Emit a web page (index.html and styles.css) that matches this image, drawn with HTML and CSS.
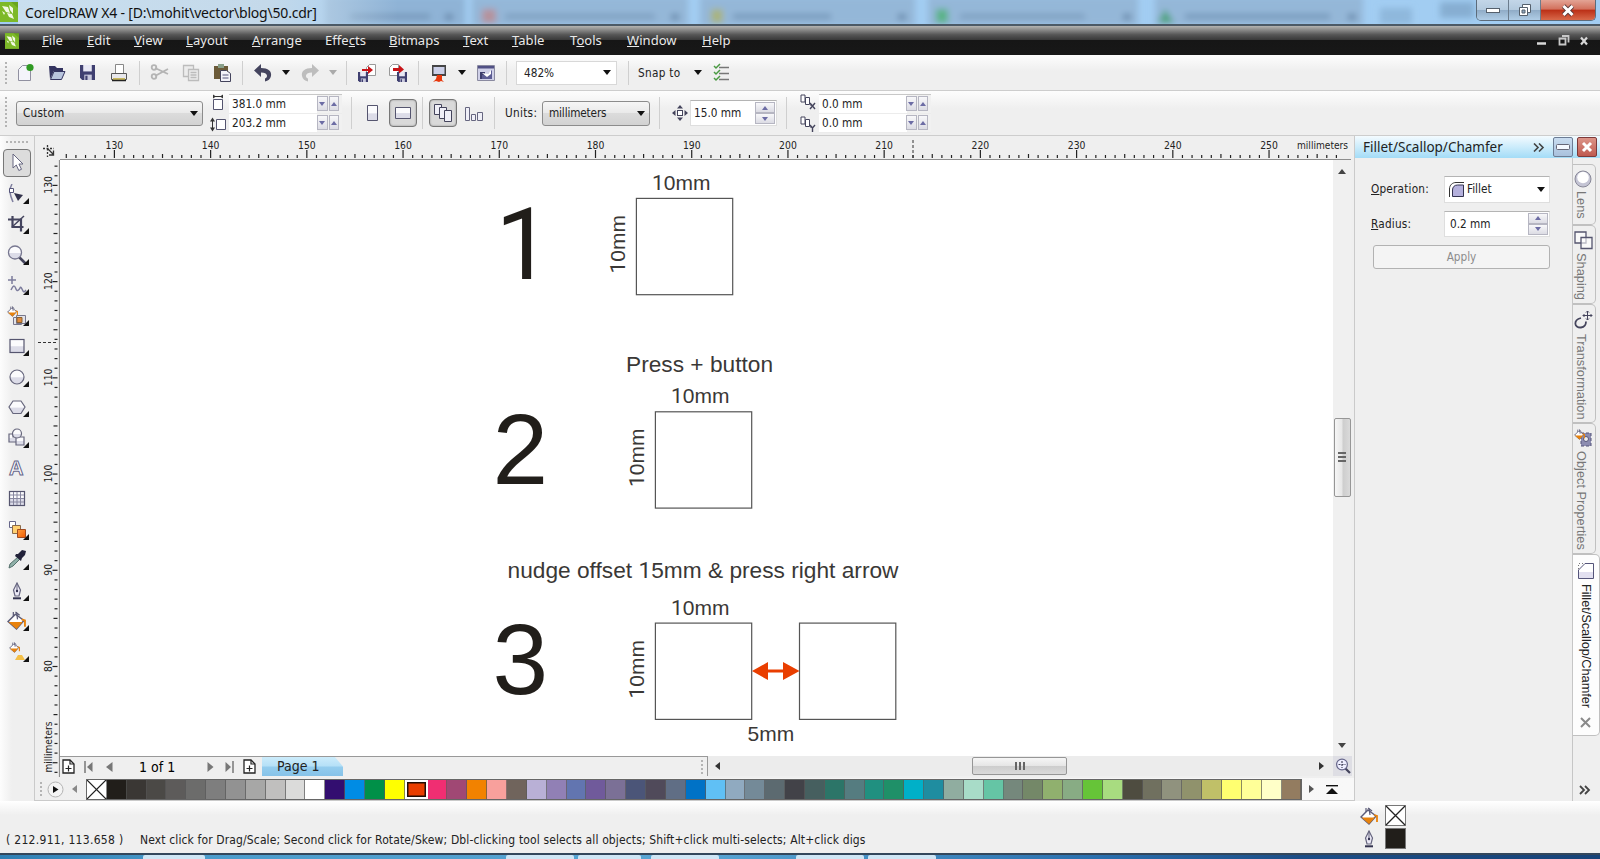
FILE: index.html
```html
<!DOCTYPE html>
<html lang="en">
<head>
    <meta charset="UTF-8">
    <meta name="viewport" content="width=device-width, initial-scale=1.0">
    <title>CorelDRAW X4 - [D:\mohit\vector\blog\50.cdr]</title>
    <link rel="stylesheet" href="styles.css">
</head>
<body>
    <!-- shared icons -->
    <svg class="defs" width="0" height="0">
        <defs>
            <linearGradient id="gShape" x1="0" y1="0" x2="0" y2="1">
                <stop offset="0.5" stop-color="#fbfbfd"/><stop offset="0.55" stop-color="#dcdce8"/>
            </linearGradient>
            <linearGradient id="gOrange" x1="0" y1="0" x2="1" y2="1">
                <stop offset="0" stop-color="#ffa040"/><stop offset="1" stop-color="#f05a00"/>
            </linearGradient>
            <symbol id="corel" viewBox="0 0 18 20">
                <rect width="18" height="20" fill="#6aa51e"/>
                <path d="M0 0h11l7 6v14h-18z" fill="#7db928"/>
                <path d="M2 4l6 1 2 6-4-1z M9 3l4 3 0 6-3-4z M7 11l5 1 2 5-5-2z M2 9l3 2-1 2z" fill="#f4fae6"/>
            </symbol>
            <symbol id="bucket" viewBox="0 0 18 18">
                <path d="M1 10L8 3l8 6-7 8z" fill="#fff" stroke="#5c5c78" stroke-width="1.4"/>
                <path d="M1.5 10.5h13.500l-6 6.500z" fill="#e8820c"/>
                <path d="M6 1v4M9 1l1 7M8 1l4 3" stroke="#5c5c78" stroke-width="1.200" fill="none"/>
                <path d="M14 8l3 1v6" stroke="#e8820c" stroke-width="1.800" fill="none"/>
            </symbol>
            <symbol id="pen" viewBox="0 0 18 18">
                <path d="M9 1l3.500 7-1.500 6h-4l-1.500-6z" fill="#eceaf6" stroke="#66667f" stroke-width="1.200"/>
                <path d="M9 1v8" stroke="#66667f"/>
                <circle cx="9" cy="9" r="1.200" fill="#333350"/>
                <path d="M5 16.300h8" stroke="#333350" stroke-width="2"/>
            </symbol>
            <symbol id="pageplus" viewBox="0 0 13 15">
                <path d="M1 1h7l4 4v9H1z" fill="#fff" stroke="#222" stroke-width="1.300"/>
                <path d="M8 1v4h4M3.500 9.500h6M6.500 6.500v6" stroke="#222" stroke-width="1.200" fill="none"/>
            </symbol>
            <symbol id="floppy" viewBox="0 0 14 14">
                <path d="M0 0h14v14H2L0 12z" fill="#3f3f70"/>
                <path d="M3 0h8v6H3z" fill="#e8e8f4"/><path d="M4 9h7v5H4z" fill="#c8c8dc"/><path d="M5 10h2v4H5z" fill="#3f3f70"/>
            </symbol>
            <symbol id="dup" viewBox="0 0 12 12">
                <path d="M1 1h4v7H1z" fill="#fff" stroke="#44445c"/><path d="M5.500 3.500h4v7h-4z" fill="#fff" stroke="#44445c"/><path d="M10 11h2" stroke="#44445c"/>
            </symbol>
        </defs>
    </svg>

    <header class="titlebar">
        <svg class="glass" width="1600" height="26">
            <defs><filter id="soft"><feGaussianBlur stdDeviation="3"/></filter></defs>
            <g filter="url(#soft)">
                <rect x="325" y="-4" width="140" height="30" fill="#8fb3d6"/>
                <rect x="472" y="-4" width="216" height="30" fill="#94b7d8"/>
                <rect x="700" y="-4" width="215" height="30" fill="#94b7d8"/>
                <rect x="928" y="-4" width="210" height="30" fill="#94b7d8"/>
                <rect x="1155" y="-4" width="208" height="30" fill="#94b7d8"/>
                <rect x="350" y="14" width="80" height="5" fill="#7596b8"/>
                <rect x="505" y="14" width="150" height="5" fill="#7d9dbe"/>
                <rect x="733" y="14" width="98" height="5" fill="#7596b8"/>
                <rect x="960" y="14" width="125" height="5" fill="#7d9dbe"/>
                <rect x="1185" y="14" width="145" height="5" fill="#7596b8"/>
                <rect x="482" y="9" width="14" height="14" fill="#b5929c"/>
                <rect x="711" y="9" width="12" height="14" fill="#a8b47e"/>
                <rect x="936" y="9" width="12" height="14" fill="#59b386"/>
                <path d="M1158 23l7-14 9 14z" fill="#4ba37c"/>
                <rect x="445" y="14" width="8" height="6" fill="#6888aa"/>
                <rect x="671" y="14" width="8" height="6" fill="#6888aa"/>
                <rect x="898" y="14" width="8" height="6" fill="#6888aa"/>
                <rect x="1123" y="14" width="8" height="6" fill="#6888aa"/>
                <rect x="1348" y="14" width="8" height="6" fill="#6888aa"/>
                <rect x="1380" y="8" width="32" height="16" fill="#8fb8dc"/>
                <rect x="1440" y="2" width="34" height="16" fill="#86aed2"/>
            </g>
        </svg>
        <svg class="app-icon" width="18" height="20"><use href="#corel"/></svg>
        <span class="title">CorelDRAW X4 - [D:\mohit\vector\blog\50.cdr]</span>
        <div class="win-buttons">
            <span class="wb"><svg width="16" height="8"><rect x="1.500" y="2.500" width="13" height="4" fill="#fff" stroke="#55606c"/></svg></span>
            <span class="wb"><svg width="16" height="14"><path d="M5.500 1.500h8v8h-8z" fill="#fff" stroke="#55606c"/><path d="M2.500 4.500h8v8h-8z" fill="#fff" stroke="#55606c"/><path d="M5 7h3v3H5z" fill="#8fa8c0" stroke="#55606c"/></svg></span>
            <span class="wb close"><svg width="14" height="13"><path d="M2.500 2l9 9M11.500 2l-9 9" stroke="#5a3a3a" stroke-width="4.600"/><path d="M2.500 2l9 9M11.500 2l-9 9" stroke="#fff" stroke-width="3"/></svg></span>
        </div>
    </header>

    <nav class="menubar">
        <svg class="doc-icon" width="14" height="18"><use href="#corel" width="14" height="18"/></svg>
        <div class="menus">
            <span><u>F</u>ile</span><span><u>E</u>dit</span><span><u>V</u>iew</span><span><u>L</u>ayout</span><span><u>A</u>rrange</span><span>Effe<u>c</u>ts</span><span><u>B</u>itmaps</span><span><u>T</u>ext</span><span><u>T</u>able</span><span>T<u>o</u>ols</span><span><u>W</u>indow</span><span><u>H</u>elp</span>
        </div>
        <svg class="mdi" width="56" height="14"><path d="M2 9.500h9" stroke="#d8d8d8" stroke-width="2.500"/><path d="M24.500 4.500h6v6h-6z M27 2h6.500v6.500" fill="none" stroke="#c8c8c8" stroke-width="1.800"/><path d="M46 3.500l6 7M52 3.500l-6 7" stroke="#d8d8d8" stroke-width="2.200"/></svg>
    </nav>

    <div class="toolbar">
        <i class="grip"></i>
        <span class="tb"><svg width="20" height="20"><path d="M2.500 17.500v-11l4-4h8v15z" fill="#f4f4fa" stroke="#9090a0"/><circle cx="14" cy="4.500" r="3.600" fill="#2f9a22"/></svg></span>
        <span class="tb"><svg width="20" height="20"><path d="M2 3h6l2 2h6v3H7L3 16z" fill="#343460"/><path d="M7 8.500h11l-3.500 8H3.500z" fill="#b8c4dc" stroke="#343460"/></svg></span>
        <span class="tb"><svg width="15" height="15"><use href="#floppy"/></svg></span>
        <span class="tb"><svg width="20" height="20"><path d="M6.500 1.500h8v9h-8z" fill="#fff" stroke="#888"/><path d="M2.500 10.500h15v6h-15z" fill="#e8e8ec" stroke="#555"/><path d="M4 15h12v2H4z" fill="#c8b860"/><path d="M3 17.500h14" stroke="#222" stroke-width="1.500"/></svg></span>
        <i class="sep"></i>
        <span class="tb"><svg width="20" height="20" fill="none" stroke="#b4b4b4" stroke-width="1.800"><path d="M5 5l13 6M5 13l13-7"/><circle cx="4" cy="4.500" r="2.300"/><circle cx="4" cy="13.500" r="2.300"/></svg></span>
        <span class="tb"><svg width="20" height="20" fill="#ececec" stroke="#bcbcbc" stroke-width="1.300"><path d="M2.500 2.500h10v11h-10z"/><path d="M7.500 6.500h10v11h-10z"/><path d="M9.500 9.500h6M9.500 12h6M9.500 14.500h6"/></svg></span>
        <span class="tb"><svg width="20" height="20"><path d="M2 3h14v13H2z" fill="#6b5a38"/><path d="M6 1h6v4H6z" fill="#8aa08a"/><path d="M8.500 7.500h6l4 3v8h-10z" fill="#f2f2fa" stroke="#44445c"/><path d="M10.500 12h6M10.500 15h6" stroke="#55557a"/></svg></span>
        <i class="sep"></i>
        <span class="tb"><svg width="20" height="20"><path d="M1 7.500L8 1v4c7 0 11 3 10 8-.5 3-3 5-6 5.500v-3c3-1 3.500-6-4-6v4.500z" fill="#44445e"/></svg></span>
        <span class="caret-slot"><i class="caret"></i></span>
        <span class="tb"><svg width="20" height="20"><path d="M19 7.500L12 1v4C5 5 1 8 2 13c.5 3 3 5 6 5.500v-3c-3-1-3.500-6 4-6v4.500z" fill="#bdbdbd"/></svg></span>
        <span class="caret-slot"><i class="caret off"></i></span>
        <i class="sep"></i>
        <span class="tb"><svg width="20" height="20"><path d="M9.500 12.500v-8l3-3h6v11z" fill="#fff" stroke="#999"/><use href="#floppy" x="1" y="9" width="10" height="10"/><path d="M5 6h6V3l5 4-5 4V8H5z" fill="#c81418"/></svg></span>
        <span class="tb"><svg width="20" height="20"><path d="M1.500 12.500v-8l3-3h6v11z" fill="#fff" stroke="#999"/><use href="#floppy" x="9" y="9" width="10" height="10"/><path d="M5 5h6V2l5 4.500-5 4V8H5z" fill="#c81418"/></svg></span>
        <i class="sep"></i>
        <span class="tb"><svg width="18" height="20"><path d="M2 2h14v11H2z" fill="#444"/><path d="M3.500 4h11v7h-11z" fill="#ccd0e8"/><path d="M7 12h5v5l2 2-3-1-2 1-3-1-3 1 3-3z" fill="#e8380c"/></svg></span>
        <span class="caret-slot"><i class="caret"></i></span>
        <span class="tb"><svg width="20" height="20"><path d="M1.500 2.500h17v15h-17z" fill="#cfd0e8" stroke="#8a8aa0"/><path d="M2 3h16v2.500H2z" fill="#505084"/><path d="M4 9h5v7H4z" fill="#3c3c6c"/><path d="M6 12l6-1 4-4v9H6z" fill="#5c5c94"/><path d="M6 10l6 1 3-4v4l-4 3z" fill="#fff"/></svg></span>
        <i class="sep"></i>
        <div class="zoom-level"><span>482%</span><i class="caret"></i></div>
        <i class="sep"></i>
        <span class="snap">Snap to</span>
        <i class="caret"></i>
        <svg class="options" width="17" height="19" fill="none"><path d="M6 4.500h10M6 10.500h10M6 16.500h10" stroke="#777" stroke-width="1.300"/><path d="M1 3l2 2 4-4M1 9l2 2 4-4M1 15l2 2 4-4" stroke="#4a9a42" stroke-width="1.500"/></svg>
    </div>

    <div class="propbar">
        <i class="grip"></i>
        <div class="select paper"><span>Custom</span><i class="caret"></i></div>
        <div class="pair-icons">
            <svg width="17" height="17"><path d="M4.500 5.500h9v10h-9z" fill="#fff" stroke="#55556f"/><path d="M4 2.500h10" stroke="#333"/><path d="M4 .500v4l3-2zM14 .500v4l-3-2z" fill="#333"/></svg>
            <svg width="17" height="15"><path d="M7.500 2.500h9v10h-9z" fill="#fff" stroke="#55556f"/><path d="M3.500 2v11" stroke="#333"/><path d="M1 4.500h5l-2.500-4zM1 10.500h5l-2.500 4z" fill="#333"/></svg>
        </div>
        <div class="pair size">
            <div><span>381.0 mm</span><b class="dn"></b><b class="up"></b></div>
            <div><span>203.2 mm</span><b class="dn"></b><b class="up"></b></div>
        </div>
        <i class="sep s1"></i>
        <span class="orient"><svg width="13" height="18"><path d="M1.500 1.500h10v15h-10z" fill="url(#gShape)" stroke="#55556f"/></svg></span>
        <span class="orient on"><svg width="18" height="14"><path d="M1.500 1.500h15v11h-15z" fill="url(#gShape)" stroke="#55556f"/></svg></span>
        <i class="sep s2"></i>
        <span class="orient on"><svg width="20" height="20" fill="#f0f0f8" stroke="#44445c"><path d="M1.500 1.500h7v10h-7z"/><path d="M6.500 4.500h7v11h-7z"/><path d="M11.500 7.500h7v11h-7z"/></svg></span>
        <span class="orient"><svg width="20" height="18" fill="#f0f0f8" stroke="#666680"><path d="M1.500 3.500h4v13h-4z"/><path d="M7.500 10.500h4v6h-4z"/><path d="M13.500 8.500h5v8h-5z"/></svg></span>
        <i class="sep s3"></i>
        <span class="units">Units:</span>
        <div class="select unit"><span>millimeters</span><i class="caret"></i></div>
        <i class="sep s4"></i>
        <svg class="nudge-icon" width="16" height="16"><path d="M8 0l3 3.500H5zM8 16l3-3.500H5zM0 8l3.500-3v6zM16 8l-3.500-3v6z" fill="#44445c"/><rect x="5.500" y="5.500" width="5" height="5" fill="#fff" stroke="#44445c"/></svg>
        <div class="field nudge"><span>15.0 mm</span><div class="spin"><b class="up"></b><b class="dn"></b></div></div>
        <i class="sep s5"></i>
        <div class="pair-icons dupes">
            <svg width="17" height="16"><use href="#dup" width="12" height="12"/><path d="M10 9l5 6M15 9l-5 6" stroke="#44445c" stroke-width="1.400"/></svg>
            <svg width="17" height="16"><use href="#dup" width="12" height="12"/><path d="M10 9l2.500 3L15 9M12.500 12v4" stroke="#44445c" stroke-width="1.400" fill="none"/></svg>
        </div>
        <div class="pair offset">
            <div><span>0.0 mm</span><b class="dn"></b><b class="up"></b></div>
            <div><span>0.0 mm</span><b class="dn"></b><b class="up"></b></div>
        </div>
    </div>

    <main class="workspace">
        <aside class="toolbox">
            <i class="grip-h"></i>
            <span class="tool on"><svg width="20" height="20"><path d="M6 1v14l3.300-3 2.500 5.500 2.700-1.200-2.600-5.300H16z" fill="#fff" stroke="#666680"/></svg></span>
            <span class="tool fly"><svg width="20" height="20"><path d="M5 0c-4 7-1 13 1 18" stroke="#8080a0" stroke-width="1.500" fill="none"/><path d="M2.500 4.500h4v4h-4z" fill="#fff" stroke="#55557a"/><path d="M7 9l9 2-5 6z" fill="#33334c"/></svg></span>
            <span class="tool fly"><svg width="20" height="20" fill="none" stroke="#44445e"><path d="M5.500 2v11h11M1 5.500h13v12" stroke-width="2.200"/><path d="M5 13L17 2" stroke-width="1.500"/></svg></span>
            <span class="tool fly"><svg width="20" height="20"><path d="M12 12l7 7" stroke="#44445c" stroke-width="2.600"/><circle cx="8" cy="7.500" r="6.500" fill="url(#gShape)" stroke="#777790" stroke-width="1.300"/></svg></span>
            <span class="tool fly"><svg width="20" height="20" fill="none" stroke="#7c7c9c" stroke-width="1.500"><path d="M5 1v8M1 5h8"/><path d="M4 15c3-6 4-4 5-1s3 1 4-1 2 1 3 3 2 0 3-1"/></svg></span>
            <span class="tool fly"><svg width="20" height="20"><use href="#bucket" width="11" height="11"/><path d="M6.500 11.500h8v7h-8zM9.500 9.500h9v8h-9z" fill="#e2e2e8" stroke="#77778c"/><path d="M10 11.500h5v5h-5z" fill="#e08a3c" stroke="#886030"/></svg></span>
            <span class="tool fly"><svg width="20" height="20"><rect x="3" y="3.500" width="14" height="13" fill="url(#gShape)" stroke="#55556f" stroke-width="1.200"/></svg></span>
            <span class="tool fly"><svg width="20" height="20"><circle cx="10" cy="10" r="7" fill="url(#gShape)" stroke="#66667c" stroke-width="1.200"/></svg></span>
            <span class="tool fly"><svg width="20" height="20"><path d="M6 4h8l4 6-4 6.500H6L2 10z" fill="url(#gShape)" stroke="#66667c" stroke-width="1.200"/></svg></span>
            <span class="tool fly"><svg width="20" height="20" fill="url(#gShape)" stroke="#66667c" stroke-width="1.200"><path d="M2 6h4v3h4v5H2z"/><path d="M9 9h8v8H9z"/><circle cx="10" cy="5.500" r="4.500"/></svg></span>
            <span class="tool"><svg width="20" height="20"><text x="2" y="17" font-size="20" font-weight="bold" font-family="Liberation Sans, sans-serif" fill="#fff" stroke="#66668a">A</text></svg></span>
            <span class="tool"><svg width="20" height="20"><rect x="2.500" y="2.500" width="15" height="14" fill="url(#gShape)" stroke="#55556f" stroke-width="1.200"/><path d="M6.500 3v13M10 3v13M13.500 3v13M3 6h14M3 9.500h14M3 13h14" stroke="#8888a0" fill="none"/></svg></span>
            <span class="tool fly"><svg width="20" height="20"><path d="M2.500 1.500h6v6h-6z" fill="#fff" stroke="#66668a"/><path d="M5.500 5.500h8v8h-8z" fill="#ffd070" stroke="#8a6a4a"/><path d="M10.500 9.500h8v8h-8z" fill="url(#gOrange)" stroke="#a04a20"/></svg></span>
            <span class="tool fly"><svg width="20" height="20"><path d="M2 18l1-4 8-7 2 2-7 7z" fill="#8fb0a8" stroke="#55706c"/><path d="M9 4l2 0 4-4 4 1-1 4-3 3-1 3-6-5z" fill="#22223a"/></svg></span>
            <span class="tool fly"><svg width="18" height="18"><use href="#pen"/></svg></span>
            <span class="tool fly"><svg width="20" height="20"><use href="#bucket" width="19" height="19"/></svg></span>
            <span class="tool fly"><svg width="20" height="20"><use href="#bucket" x="2" width="11" height="11"/><path d="M8 18l3-5h4l3 5z" fill="#f4c048"/></svg></span>
        </aside>

        <section class="center">
            <div class="ruler-row">
                <svg class="origin" width="25" height="23" fill="none" stroke="#333" stroke-width="1.300"><path d="M8 11.500h11M12.500 8v12" stroke-dasharray="2 1.500"/><path d="M13 12l5 5M18.500 13.500v4.500H14"/></svg>
                <svg id="hruler" class="ruler" width="1294" height="23" viewBox="60 137 1294 23"></svg>
            </div>
            <div class="canvas-row">
                <svg id="vruler" class="ruler v" width="25" height="617" viewBox="35 160 25 617"></svg>
                <div class="stage">
                    <div class="page-area">
                        <svg class="drawing" width="1273" height="596" viewBox="60 160 1273 596">
                            <g fill="#211e1a" font-size="100">
                                <text x="495.500" y="278.500"><tspan class="one">1</tspan></text>
                                <text x="492.500" y="484">2</text>
                                <text x="492.500" y="694">3</text>
                            </g>
                            <g fill="none" stroke="#555" stroke-width="1.200">
                                <rect x="636.400" y="198.400" width="96.300" height="96.300"/>
                                <rect x="655.400" y="411.800" width="96.300" height="96.300"/>
                                <rect x="655.400" y="623.100" width="96.300" height="96.300"/>
                                <rect x="799.500" y="623.100" width="96.300" height="96.300"/>
                            </g>
                            <g fill="#3a3836" font-size="21">
                                <text x="652" y="190"><tspan class="one">1</tspan>0mm</text>
                                <text x="671" y="403.300"><tspan class="one">1</tspan>0mm</text>
                                <text x="671" y="615.300"><tspan class="one">1</tspan>0mm</text>
                                <text x="747.500" y="741.300">5mm</text>
                                <text transform="translate(624.500 273.500) rotate(-90)"><tspan class="one">1</tspan>0mm</text>
                                <text transform="translate(643.500 487) rotate(-90)"><tspan class="one">1</tspan>0mm</text>
                                <text transform="translate(643.500 698.500) rotate(-90)"><tspan class="one">1</tspan>0mm</text>
                            </g>
                            <g fill="#3a3836" font-size="22.700">
                                <text x="626" y="372.300" textLength="147">Press + button</text>
                                <text x="507.500" y="577.700" textLength="391">nudge offset <tspan class="one">1</tspan>5mm &amp; press right arrow</text>
                            </g>
                            <path d="M752 671l16-9v7.500h15V662l16.500 9-16.500 9v-7.500h-15v7.500z" fill="#e93e00"/>
                        </svg>
                        <div class="vscroll">
                            <svg class="arrow" width="8" height="5"><path d="M0 5l4-5 4 5z" fill="#444"/></svg>
                            <div class="vthumb"><i></i><i></i><i></i></div>
                            <svg class="arrow" width="8" height="5"><path d="M0 0l4 5 4-5z" fill="#444"/></svg>
                        </div>
                    </div>
                    <div class="navbar">
                        <div class="pages">
                            <svg width="13" height="15"><use href="#pageplus"/></svg>
                            <svg width="9" height="12" class="n1"><path d="M1 0v12" stroke="#777" stroke-width="1.500"/><path d="M8.500 1v10L3 6z" fill="#777"/></svg>
                            <svg width="7" height="12" class="n2"><path d="M6.500 1v10L0 6z" fill="#777"/></svg>
                            <span class="count">1 of 1</span>
                            <svg width="7" height="12" class="n3"><path d="M.500 1v10L6.500 6z" fill="#777"/></svg>
                            <svg width="9" height="12" class="n4"><path d="M8 0v12" stroke="#777" stroke-width="1.500"/><path d="M.500 1v10L6 6z" fill="#777"/></svg>
                            <svg width="13" height="15" class="n5"><use href="#pageplus"/></svg>
                            <span class="page-tab">Page 1</span>
                            <i class="grip"></i>
                        </div>
                        <div class="hscroll">
                            <svg width="5" height="8"><path d="M5 0v8L0 4z" fill="#333"/></svg>
                            <div class="hthumb"><i></i><i></i><i></i></div>
                            <svg width="5" height="8"><path d="M0 0v8l5-4z" fill="#333"/></svg>
                        </div>
                        <div class="navigator"><svg width="16" height="16"><path d="M10 10l5 5" stroke="#44445c" stroke-width="2.200"/><circle cx="7" cy="6.500" r="5.400" fill="#eef" stroke="#66668a" stroke-width="1.200"/><path d="M7 3v7M3.500 6.500h7" stroke="#44445c" stroke-width="1.200" stroke-dasharray="2 1"/></svg></div>
                    </div>
                </div>
            </div>
            <div class="palette">
                <i class="grip"></i>
                <svg width="17" height="17"><circle cx="8.500" cy="8.500" r="7.500" fill="#f4f4f4" stroke="#b4b4b4"/><path d="M6 5v7l5.500-3.500z" fill="#111"/></svg>
                <svg class="pal-left" width="5" height="8"><path d="M5 0v8L0 4z" fill="#888"/></svg>
                <div class="swatches" id="swatches"></div>
                <svg class="pal-right" width="5" height="8"><path d="M0 0v8l5-4z" fill="#555"/></svg>
                <svg width="12" height="9"><path d="M0 .700h12" stroke="#111" stroke-width="1.400"/><path d="M0 9l6-6 6 6z" fill="#111"/></svg>
            </div>
        </section>

        <section class="docker">
            <div class="docker-head">
                <span class="docker-title">Fillet/Scallop/Chamfer</span>
                <svg width="12" height="9" fill="none" stroke="#444" stroke-width="1.600"><path d="M1 .500l4 4-4 4M6 .500l4 4-4 4"/></svg>
                <span class="dk"><svg width="14" height="7"><rect x=".500" y=".500" width="13" height="5" rx="1" fill="#f4f8ff" stroke="#667"/></svg></span>
                <span class="dk red"><svg width="12" height="12"><path d="M2 2l8 8M10 2l-8 8" stroke="#fff" stroke-width="3"/></svg></span>
            </div>
            <div class="docker-body">
                <form class="fillet">
                    <label><u>O</u>peration:</label>
                    <div class="field op">
                        <svg width="16" height="16"><path d="M1.500 16V8c0-4 3-6.500 6.500-6.500h8" fill="none" stroke="#333"/><path d="M4.500 15.500V9c0-3 2-5 5-5h6v11.500z" fill="#b4b0dc" stroke="#333350"/></svg>
                        <span>Fillet</span><i class="caret"></i>
                    </div>
                    <label><u>R</u>adius:</label>
                    <div class="field rad"><span>0.2 mm</span><div class="spin"><b class="up"></b><b class="dn"></b></div></div>
                    <div class="apply">Apply</div>
                </form>
                <div class="tabs">
                    <div class="tab lens"><svg width="18" height="18"><circle cx="9" cy="9" r="8" fill="#c4c4d4" stroke="#888898"/><circle cx="9" cy="7.500" r="5.800" fill="#fff"/></svg><span>Lens</span></div>
                    <div class="tab shaping"><svg width="19" height="19" fill="#fff" fill-opacity=".6" stroke="#55556f" stroke-width="1.300"><path d="M1 1h11v11H1z"/><path d="M7 6.500h11v11H7z"/></svg><span>Shaping</span></div>
                    <div class="tab trans"><svg width="19" height="19" fill="none" stroke="#44445c"><path d="M13.500 1v9M9 5.500h9M12 2.500l1.500-1.500L15 2.500M12 8.500l1.500 1.500L15 8.500M10.500 4L9 5.500 10.500 7M16.500 4L18 5.500 16.500 7"/><path d="M7 8c-8 2-7 10 0 9.500 4-.5 5-3 5-6" stroke-width="1.800"/></svg><span>Transformation</span></div>
                    <div class="tab props"><svg width="19" height="19"><path d="M7 4h10v13H7z" fill="#8c8cb0" stroke="#55557a" stroke-dasharray="3 2"/><circle cx="12" cy="10" r="2.500" fill="#eee" stroke="#55557a"/><use href="#bucket" width="11" height="11"/></svg><span>Object Properties</span></div>
                    <div class="tab active"><svg width="18" height="18"><path d="M8 1.500h8.500v15h-15V8z" fill="#fff" stroke="#55557a"/><path d="M2 10h14v6H2z" fill="#e2e0f0"/><path d="M1.500 7V1.500H8" fill="none" stroke="#777" stroke-dasharray="1 2"/></svg><span>Fillet/Scallop/Chamfer</span><svg class="x" width="11" height="11"><path d="M1 1l9 9M10 1l-9 9" stroke="#8a8a8a" stroke-width="2"/></svg></div>
                    <svg class="more" width="12" height="10" fill="none" stroke="#444" stroke-width="1.800"><path d="M1 1l4 4-4 4M6 1l4 4-4 4"/></svg>
                </div>
            </div>
        </section>
    </main>

    <footer class="status">
        <span class="coords">( 212.911, 113.658 )</span>
        <span class="hint">Next click for Drag/Scale; Second click for Rotate/Skew; Dbl-clicking tool selects all objects; Shift+click multi-selects; Alt+click digs</span>
        <div class="fills">
            <svg width="18" height="18"><use href="#bucket"/></svg>
            <svg width="21" height="21"><rect x=".500" y=".500" width="20" height="20" fill="#fff" stroke="#777"/><path d="M1 1l19 19M20 1L1 20" stroke="#222" stroke-width="1.300"/></svg>
            <svg width="18" height="18"><use href="#pen"/></svg>
            <svg width="21" height="21"><rect x=".500" y=".500" width="20" height="20" fill="#211e1a" stroke="#777"/></svg>
        </div>
    </footer>
    <div class="taskbar"><i class="t1"></i><i class="t2"></i><i class="t3"></i><i class="t4"></i><i class="t5"></i><i class="t6"></i></div>

    <script>
        const NS = 'http://www.w3.org/2000/svg';
        const MM = 9.622; // pixels per millimeter at 482%

        function add(svg, tag, attrs, text) {
            const el = document.createElementNS(NS, tag);
            for (const k in attrs) el.setAttribute(k, attrs[k]);
            if (text) el.textContent = text;
            svg.appendChild(el);
        }

        // horizontal ruler
        const h = document.getElementById('hruler');
        for (let mm = 125; mm <= 257; mm++) {
            const x = 114.4 + (mm - 130) * MM;
            const len = mm % 10 === 0 ? 8 : mm % 5 === 0 ? 4 : 3;
            add(h, 'path', { d: `M${x} ${158 - len}V158`, class: 'tick' });
            if (mm % 10 === 0 && mm <= 250) add(h, 'text', { x: x, y: 149 }, String(mm));
        }
        add(h, 'text', { x: 1322.5, y: 149, textLength: 51, lengthAdjust: 'spacingAndGlyphs' }, 'millimeters');
        add(h, 'path', { d: 'M913 140V158', class: 'cursor-mark' });
        add(h, 'path', { d: 'M59 159.500H1351', class: 'edge' });

        // vertical ruler
        const v = document.getElementById('vruler');
        for (let mm = 69; mm <= 132; mm++) {
            const y = 185.4 + (130 - mm) * MM;
            const len = mm % 10 === 0 ? 5 : mm % 5 === 0 ? 4 : 3;
            add(v, 'path', { d: `M${57.5 - len} ${y}H57.5`, class: 'tick' });
            if (mm % 10 === 0 && mm > 70) add(v, 'text', { transform: `translate(51.5 ${y - 0.5}) rotate(-90)` }, String(mm));
        }
        add(v, 'text', { transform: 'translate(52 747) rotate(-90)', textLength: 51, lengthAdjust: 'spacingAndGlyphs' }, 'millimeters');
        add(v, 'path', { d: 'M38 342.5H57', class: 'cursor-mark' });
        add(v, 'path', { d: 'M59.500 160V777', class: 'edge' });

        // colour palette
        const colors = ['none', '#211e1a', '#3a3734', '#4b4946', '#5d5b5a', '#6c6c6b', '#7e7e7e', '#929292', '#a7a7a6', '#c0bfbe', '#dbdbda', '#ffffff',
            '#330e70', '#008ce4', '#009048', '#ffff00', '#e93e00', '#f02e72', '#a04874', '#f28200', '#f8a09c', '#70645c', '#b9b0d6',
            '#9180b5', '#6275b0', '#705a9b', '#7b7096', '#4b5578', '#504a5a', '#606e85', '#0072c6', '#60c0f5', '#90aac0', '#748a98', '#5c6a70',
            '#424248', '#465f5f', '#2c7568', '#557c80', '#209080', '#1f9068', '#00b0c8', '#1f8da0', '#90ada0', '#a8dcc8', '#65c5a5', '#75887c',
            '#748868', '#90b06e', '#88ac84', '#66c438', '#a8dc80', '#4e4c40', '#70705f', '#90927e', '#90926c', '#c0c068', '#ffff70', '#ffff98',
            '#ffffc8', '#937c60'];
        const box = document.getElementById('swatches');
        colors.forEach(c => {
            const s = document.createElement('i');
            if (c === 'none') s.className = 'nofill';
            else s.style.backgroundColor = c;
            if (c === '#e93e00') s.className = 'picked';
            box.appendChild(s);
        });
    </script>
</body>
</html>
```

FILE: styles.css
```css
* {
    box-sizing: border-box;
}
body {
    margin: 0;
    width: 1600px;
    height: 859px;
    overflow: hidden;
    display: flex;
    flex-direction: column;
    background-color: #efefef;
    color: #222;
    font-family: "DejaVu Sans Condensed", "DejaVu Sans", sans-serif;
    font-stretch: condensed;
    font-size: 11.7px;
}
svg {
    display: block;
    flex: none;
}
.defs {
    position: absolute;
}

/* title bar */
.titlebar {
    position: relative;
    height: 26px;
    display: flex;
    align-items: center;
    background: #a2cdf2;
    border-bottom: 2px solid #4c5a66;
    overflow: hidden;
}
.glass {
    position: absolute;
    left: 0;
    top: 0;
}
.app-icon {
    position: relative;
}
.title {
    position: relative;
    flex: 1;
    align-self: stretch;
    padding-left: 7px;
    line-height: 25px;
    font-family: "Noto Sans", sans-serif;
    font-stretch: normal;
    font-size: 14px;
    letter-spacing: -0.2px;
    color: #111;
    background: linear-gradient(to right, #c9dfef 0, #c4d9ea 250px, rgba(160, 195, 225, 0) 380px);
}
.win-buttons {
    position: relative;
    align-self: flex-start;
    display: flex;
    margin-right: 4px;
    height: 21px;
    border: 1px solid #5c6b7a;
    border-top: none;
    border-radius: 0 0 5px 5px;
    overflow: hidden;
}
.wb {
    width: 32px;
    display: flex;
    align-items: center;
    justify-content: center;
    border-right: 1px solid #6b7c8d;
    background: linear-gradient(#c3d6e8 0, #b4cade 48%, #8fabc6 50%, #b0cde6 100%);
}
.wb.close {
    width: 54px;
    border-right: none;
    background: linear-gradient(#e3a495 0, #d2705c 46%, #bb2f16 50%, #d8694a 100%);
}

/* menu */
.menubar {
    height: 29px;
    display: flex;
    align-items: center;
    background: linear-gradient(#b4b4b2 0, #565656 30%, #3a3a3a 47%, #161616 50%, #181818 100%);
    color: #e9e9e9;
    font-family: "Noto Sans", sans-serif;
    font-stretch: normal;
    font-size: 13px;
}
.doc-icon {
    margin-left: 5px;
}
.menus {
    flex: 1;
    margin-left: 23px;
    display: grid;
    grid-template-columns: 45px 47px 52px 66px 73px 64px 74px 49px 58px 57px 75px 40px;
    line-height: 29px;
}
.menus span {
    letter-spacing: 0.05px;
}
.mdi {
    margin-right: 9px;
}

/* common bits */
.grip {
    flex: none;
    width: 2px;
    background: repeating-linear-gradient(#b4b4b4 0 2px, transparent 2px 4px);
}
.sep {
    flex: none;
    width: 1px;
    background-color: #cfcfcf;
}
.caret {
    flex: none;
    width: 0;
    height: 0;
    border: 4px solid transparent;
    border-top: 5px solid #111;
    border-bottom: none;
}
.caret.off {
    border-top-color: #aaa;
}
.up::after, .dn::after {
    content: "";
    border: 3px solid transparent;
}
.up::after {
    border-top: none;
    border-bottom: 4px solid #6c6ca4;
}
.dn::after {
    border-bottom: none;
    border-top: 4px solid #6c6ca4;
}
.up, .dn {
    display: flex;
    align-items: center;
    justify-content: center;
    border: 1px solid #b6b6c2;
    background: linear-gradient(#f8f8fa, #dcdce4);
}

/* standard toolbar */
.toolbar {
    height: 36px;
    display: flex;
    align-items: center;
    background: linear-gradient(#fdfdfd, #efefef 45%);
    border-bottom: 1px solid #cdcdcd;
}
.toolbar .grip {
    height: 22px;
    margin: 0 3px 0 5px;
}
.toolbar .sep {
    height: 24px;
    margin: 0 4.5px;
}
.tb {
    width: 31px;
    display: flex;
    justify-content: center;
}
.caret-slot {
    width: 16px;
    display: flex;
    justify-content: center;
}
.zoom-level {
    width: 101px;
    height: 24px;
    margin: 0 6px 0 5px;
    padding: 0 5px 0 7px;
    display: flex;
    align-items: center;
    justify-content: space-between;
    border: 1px solid #d8d8d8;
    background: #fff;
}
.snap {
    margin: 0 12px 0 5px;
    width: 44px;
    white-space: nowrap;
    letter-spacing: 0.3px;
}
.options {
    margin-left: 11px;
}

/* property bar */
.propbar {
    height: 45px;
    display: flex;
    align-items: center;
    background: linear-gradient(#fdfdfd, #efefef 40%);
    border-bottom: 1px solid #cdcdcd;
}
.propbar .grip {
    height: 32px;
    margin: 0 9px 0 5px;
}
.propbar .sep {
    height: 32px;
}
.select {
    height: 25px;
    padding: 0 4px 0 6px;
    display: flex;
    align-items: center;
    justify-content: space-between;
    border: 1px solid #8c8c8c;
    border-radius: 3px;
    background: linear-gradient(#f6f6f6 0, #e9e9e9 48%, #dbdbdb 50%, #d2d2d2 100%);
}
.paper {
    width: 187px;
    letter-spacing: 0.2px;
}
.unit {
    width: 108px;
    letter-spacing: -0.15px;
}
.pair-icons {
    margin-left: 6px;
    width: 20px;
    height: 38px;
    display: flex;
    flex-direction: column;
    justify-content: space-between;
}
.pair {
    height: 39px;
    border-top: 1px solid #c8c8c8;
    display: flex;
    flex-direction: column;
}
.pair div {
    flex: 1;
    display: flex;
    align-items: center;
    gap: 1px;
    padding: 0 3px;
    background: linear-gradient(to right, #fff 88px, #f1f1f1 88px);
    border-bottom: 1px solid #ececec;
}
.pair span {
    flex: 1;
}
.pair b {
    width: 10.500px;
    height: 15px;
}
.size {
    width: 113px;
}
.offset {
    width: 112px;
    margin-left: -1px;
}
.s1 { margin: 0 6px 0 9px; }
.s2 { margin: 0 6px 0 5px; }
.s3 { margin: 0 10px 0 6px; }
.s4 { margin: 0 12px 0 9px; }
.s5 { margin: 0 7px 0 9px; }
.orient {
    width: 28px;
    height: 28px;
    display: flex;
    align-items: center;
    justify-content: center;
}
.orient + .orient {
    margin-left: 3px;
}
.orient.on {
    border: 1px solid #777;
    border-radius: 4px;
    background: #d9d9d9;
    box-shadow: inset 0 0 2px #888;
}
.units {
    width: 37px;
    letter-spacing: 0.3px;
}
.field {
    display: flex;
    align-items: center;
    background: #fff;
    border: 1px solid #dedede;
    border-top-color: #b4b4b4;
}
.field span {
    flex: 1;
}
.nudge {
    width: 87px;
    height: 26px;
    margin-left: 2px;
    padding-left: 3px;
}
.spin {
    width: 20px;
    height: 22px;
    margin-right: 1px;
    display: flex;
    flex-direction: column;
}
.spin b {
    flex: 1;
}

/* workspace */
.workspace {
    height: 665px;
    display: flex;
}
.toolbox {
    width: 35px;
    display: flex;
    flex-direction: column;
    align-items: center;
    background: linear-gradient(to right, #fdfdfd, #efefef 12px);
    border-right: 1px solid #cacaca;
}
.grip-h {
    width: 22px;
    height: 2px;
    margin: 5px 0 6px;
    background: repeating-linear-gradient(to right, #b4b4b4 0 2px, transparent 2px 4px);
}
.tool {
    position: relative;
    width: 28px;
    height: 28px;
    margin-bottom: 2.550px;
    display: flex;
    align-items: center;
    justify-content: center;
}
.tool.on {
    border: 1.500px solid #777;
    border-radius: 4px;
    background: #dcdcdc;
}
.tool.fly::after {
    content: "";
    position: absolute;
    right: 2px;
    bottom: 4px;
    border-left: 6px solid transparent;
    border-bottom: 6px solid #111;
}
.center {
    width: 1320px;
    display: flex;
    flex-direction: column;
    border-right: 1px solid #cacaca;
}
.ruler-row, .canvas-row {
    display: flex;
}
.ruler-row {
    height: 24px;
    padding-top: 1px;
}
.ruler text {
    font-size: 10.300px;
    fill: #222;
    text-anchor: middle;
}
.tick {
    stroke: #222;
    stroke-width: 1.200;
}
.edge {
    stroke: #8e8e8e;
    stroke-width: 1.200;
}
.cursor-mark {
    stroke: #333;
    stroke-dasharray: 3 2;
}
.stage {
    width: 1292px;
}
.page-area {
    display: flex;
    height: 596px;
}
.drawing {
    background: #fff;
    font-family: "Liberation Sans", Arial, sans-serif;
    font-stretch: normal;
}
/* numeral one without the foot */
.one {
    font-family: Roboto, "Liberation Sans", sans-serif;
}
.vscroll {
    width: 18px;
    display: flex;
    flex-direction: column;
    align-items: center;
    justify-content: space-between;
    padding: 9px 0 8px;
    background: #f0f0f0;
}
.vthumb {
    width: 17px;
    height: 79px;
    margin-top: -3px;
    display: flex;
    flex-direction: column;
    align-items: center;
    justify-content: center;
    gap: 2px;
    border: 1px solid #969696;
    border-radius: 2px;
    background: linear-gradient(to right, #f6f6f6, #e6e6e6 48%, #cdcdcd 52%, #dadada);
}
.vthumb i {
    width: 8px;
    height: 2px;
    background: #666;
}
.navbar {
    display: flex;
    height: 20px;
}
.pages {
    width: 648px;
    display: flex;
    align-items: center;
    padding-left: 2px;
    border-top: 1px solid #999;
    border-right: 1px solid #999;
}
.n1 { margin-left: 9px; }
.n2 { margin-left: 13px; }
.n3 { margin-left: 29px; }
.n4 { margin-left: 11px; }
.n5 { margin-left: 9px; }
.count {
    margin-left: 26px;
    width: 39px;
    font-size: 14px;
    color: #000;
    white-space: nowrap;
}
.page-tab {
    width: 81px;
    height: 19px;
    margin-left: 6px;
    padding-left: 15px;
    line-height: 18px;
    font-size: 14px;
    white-space: nowrap;
    background: linear-gradient(#ccecfb 0, #b5e0f7 48%, #94cdee 52%, #86c2e8 100%);
    clip-path: polygon(0 0, 90% 0, 100% 50%, 100% 100%, 0 100%);
}
.pages .grip {
    height: 14px;
    margin-left: auto;
    margin-right: 4px;
}
.hscroll {
    flex: 1;
    display: flex;
    align-items: center;
    justify-content: space-between;
    padding: 0 9px 0 7px;
    background: #ececec;
}
.hthumb {
    width: 95px;
    height: 18px;
    display: flex;
    align-items: center;
    justify-content: center;
    gap: 2px;
    border: 1px solid #969696;
    border-radius: 2px;
    background: linear-gradient(#f6f6f6, #e6e6e6 48%, #cdcdcd 52%, #dadada);
}
.hthumb i {
    width: 2px;
    height: 8px;
    background: #666;
}
.navigator {
    width: 19px;
    display: flex;
    align-items: center;
    justify-content: center;
    background: #dedee4;
}
.palette {
    height: 24px;
    margin-top: 1px;
    display: flex;
    align-items: center;
    padding-left: 5px;
    background: linear-gradient(to right, #efefef, #f8f8f8);
    border-bottom: 1px solid #cacaca;
}
.palette .grip {
    height: 14px;
    margin-right: 5px;
}
.pal-left {
    margin: 0 9px 0 8px;
}
.swatches {
    width: 1216px;
    height: 21px;
    display: flex;
    padding-left: 1px;
    background: #666;
    border: 1px solid #666;
    border-left: none;
}
.swatches i {
    flex: 1;
    border-right: 1px solid rgba(90, 90, 90, 0.7);
}
.nofill {
    background: linear-gradient(to top right, transparent 47%, #222 48%, #222 52%, transparent 53%), linear-gradient(to bottom right, #fff 47%, #222 48%, #222 52%, #fff 53%);
}
.swatches .picked {
    border: 2px solid #fff;
    box-shadow: inset 0 0 0 1.500px #220c04;
}
.pal-right {
    margin: 0 12px 0 7px;
}

/* docker */
.docker {
    width: 245px;
    display: flex;
    flex-direction: column;
}
.docker-head {
    height: 22px;
    display: flex;
    align-items: center;
    padding: 0 3px 0 8px;
    background: linear-gradient(#f4fbff, #a3dcf7);
}
.docker-title {
    flex: 1;
    font-family: "Noto Sans", sans-serif;
    font-stretch: normal;
    font-size: 13.500px;
}
.dk {
    width: 20px;
    height: 20px;
    margin-left: 8px;
    display: flex;
    align-items: center;
    justify-content: center;
    border: 1px solid #6c7c94;
    border-radius: 2px;
    background: linear-gradient(#c9dcf0, #a9c1dd);
}
.dk.red {
    margin-left: 4px;
    border-color: #7c3a3a;
    background: linear-gradient(#dc9488, #bf5a50);
}
.docker-body {
    flex: 1;
    display: flex;
}
.fillet {
    width: 217px;
    padding: 18px 0 0 16px;
    display: grid;
    grid-template-columns: 73px 106px;
    grid-template-rows: 26px 26px 24px;
    row-gap: 8.500px;
    align-items: center;
    align-content: start;
}
.fillet label {
    letter-spacing: 0.2px;
}
.op {
    height: 27px;
    padding: 0 4px 0 3px;
    gap: 3px;
}
.rad {
    height: 26px;
    padding-left: 5px;
}
.apply {
    grid-column: 1 / 3;
    margin-left: 2px;
    height: 24px;
    line-height: 22px;
    text-align: center;
    color: #8c8c8c;
    border: 1px solid #b2b2b2;
    border-radius: 3px;
    background: #f4f4f4;
}
.tabs {
    width: 28px;
    border-left: 1px solid #c6c6c6;
    padding-top: 6px;
}
.tab {
    width: 23px;
    display: flex;
    flex-direction: column;
    align-items: center;
    padding: 5px 2px 0 0;
    border: 1px solid #c0c0c0;
    border-left: none;
    border-radius: 0 5px 5px 0;
    color: #777;
    font-family: "Liberation Sans", Arial, sans-serif;
    font-stretch: normal;
    font-size: 12.800px;
}
.tab span {
    writing-mode: vertical-rl;
    white-space: nowrap;
    margin: 3px 3px 0 0;
}
.lens { height: 61px; }
.shaping { height: 79px; }
.trans { height: 119px; }
.trans span { margin-top: 5px; }
.props { height: 131px; }
.active {
    width: 27px;
    height: 182px;
    padding: 7px 1px 0 1px;
    background: #fdfdfd;
    color: #222;
}
.active span {
    margin: 4px 0 0 0;
    letter-spacing: -0.05px;
}
.active .x {
    margin: 9px 2px 0 0;
}
.more {
    margin: 49px 0 0 6px;
}

/* status bar */
.status {
    height: 52px;
    display: flex;
    align-items: flex-end;
    padding: 0 194px 0 6px;
    background: linear-gradient(#fff, #efefef 14px);
}
.coords, .hint {
    line-height: 16px;
    margin-bottom: 5px;
    white-space: nowrap;
    font-size: 12px;
}
.coords {
    width: 134px;
    letter-spacing: 0.3px;
}
.hint {
    flex: 1;
    letter-spacing: 0.13px;
}
.fills {
    display: grid;
    grid-template-columns: 25px 21px;
    row-gap: 2px;
    align-items: center;
    margin-bottom: 4px;
}

/* strip of the taskbar under the window */
.taskbar {
    height: 6px;
    display: flex;
    border-top: 2px solid #33475c;
    background: linear-gradient(to right, #2f7fb4 0, #4b9ccc 200px, #5aa6d4 700px, #2a6fae 1100px, #1c4d86 1300px, #174378 1600px);
}
.taskbar i {
    background: #cfe6f5;
    border-radius: 2px 2px 0 0;
}
.t1 { margin-left: 143px; width: 62px; }
.t2 { margin-left: 301px; width: 68px; }
.t3 { margin-left: 4px; width: 63px; }
.t4 { margin-left: 10px; width: 68px; }
.t5 { margin-left: 77px; width: 68px; }
.t6 { margin-left: 4px; width: 68px; }
```
